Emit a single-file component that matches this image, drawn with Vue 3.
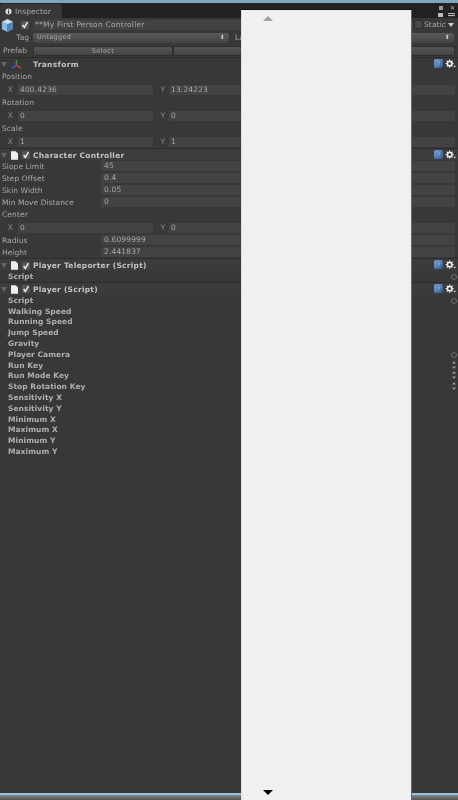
<script setup>
const charRows = [
  ['Slope Limit', '45'], ['Step Offset', '0.4'], ['Skin Width', '0.05'], ['Min Move Distance', '0']
]
const playerRows = [
  ['Walking Speed', ''], ['Running Speed', ''], ['Jump Speed', ''], ['Gravity', ''], ['Player Camera', 'dot'],
  ['Run Key', 'sel'], ['Run Mode Key', 'sel'], ['Stop Rotation Key', 'sel'], ['Sensitivity X', ''], ['Sensitivity Y', ''],
  ['Minimum X', ''], ['Maximum X', ''], ['Minimum Y', ''], ['Maximum Y', '']
]
const transform = [
  { label: 'Position', x: '400.4236', y: '13.24223' },
  { label: 'Rotation', x: '0', y: '0' },
  { label: 'Scale', x: '1', y: '1' }
]
const gearPath = 'M5 .6 6 .6 6.3 2 7.4 2.5 8.6 1.8 9.3 2.5 8.6 3.7 9 4.8 10.4 5.1 10.4 6 9 6.3 8.6 7.4 9.3 8.6 8.6 9.3 7.4 8.6 6.3 9 6 10.4 5 10.4 4.7 9 3.6 8.6 2.4 9.3 1.7 8.6 2.4 7.4 2 6.3 .6 6 .6 5.1 2 4.8 2.4 3.7 1.7 2.5 2.4 1.8 3.6 2.5 4.7 2Z'
</script>

<template>
  <div class="page">
    <div class="content">
      <div class="topline"></div>
      <div class="tabbar">
        <div class="tab">
          <svg class="info" viewBox="0 0 8 8"><circle cx="4" cy="4" r="3.5" fill="#ddd"/><rect x="3.4" y="1.5" width="1.3" height="1.2" fill="#333"/><rect x="3.4" y="3.3" width="1.3" height="3.2" fill="#333"/></svg>
          <span>Inspector</span>
        </div>
        <div class="winbtns">
          <div class="winrow"><span class="tiny-square"></span><span class="tiny-x">✕</span></div>
          <div class="winrow"><span class="lock"></span><span class="menu"></span></div>
        </div>
      </div>

      <div class="gohead">
        <svg class="cube" viewBox="0 0 14 16">
          <path d="M7 1 13 4 7 7 1 4Z" fill="#c9def2"/><path d="M1 4 7 7V15L1 12Z" fill="#8fb8e0"/><path d="M13 4 7 7V15L13 12Z" fill="#4d86c4"/>
        </svg>
        <span class="check"><svg viewBox="0 0 10 10"><path d="M2 5 4.2 8 8 1.5" fill="none" stroke="#eee" stroke-width="1.8"/></svg></span>
        <div class="namefield">**My First Person Controller</div>
        <span class="staticbox"></span><span class="statictext">Static</span><span class="tridown"></span>
      </div>
      <div class="tagrow">
        <span class="taglabel">Tag</span>
        <div class="dropdown first">Untagged<span class="updown">⬍</span></div>
        <span class="laylabel">La</span>
        <div class="dropdown second"><span></span><span class="updown">⬍</span></div>
      </div>
      <div class="prefabrow">
        <span class="preflabel">Prefab</span>
        <div class="prefbtn">Select</div>
        <div class="prefbtn rev">Revert</div>
      </div>

      <div class="comp transform-head">
        <span class="fold"></span>
        <svg class="axis" viewBox="0 0 12 12"><path d="M6 1V7" stroke="#3c9a3c" stroke-width="1.6"/><path d="M6 7 1 10" stroke="#3f58d8" stroke-width="1.6"/><path d="M6 7 11 10" stroke="#d23b3b" stroke-width="1.6"/></svg>
        <span class="title transform-title">Transform</span>
        <span class="help">?</span>
        <svg class="gear" viewBox="0 0 13 11"><path :d="gearPath" fill="#eee"/><circle cx="5.5" cy="5.5" r="1.7" fill="#3a3a3a"/><path d="M10 8H13L11.5 10Z" fill="#ddd"/></svg>
      </div>
      <template v-for="t in transform" :key="t.label">
        <div class="vlabel">{{ t.label }}</div>
        <div class="vecrow">
          <span class="axislab">X</span><div class="field">{{ t.x }}</div>
          <span class="axislab y">Y</span><div class="field wide">{{ t.y }}</div>
        </div>
      </template>

      <div class="comp comp-char">
        <span class="fold"></span>
        <svg class="doc" viewBox="0 0 9 11"><path d="M0 0H6L9 3V11H0Z" fill="#eee"/></svg>
        <span class="check"><svg viewBox="0 0 10 10"><path d="M2 5 4.2 8 8 1.5" fill="none" stroke="#eee" stroke-width="1.8"/></svg></span>
        <span class="title">Character Controller</span>
        <span class="help">?</span>
        <svg class="gear" viewBox="0 0 13 11"><path :d="gearPath" fill="#eee"/><circle cx="5.5" cy="5.5" r="1.7" fill="#3a3a3a"/><path d="M10 8H13L11.5 10Z" fill="#ddd"/></svg>
      </div>
      <div v-for="r in charRows" :key="r[0]" class="proprow">
        <span class="plabel">{{ r[0] }}</span><div class="field pfield">{{ r[1] }}</div>
      </div>
      <div class="vlabel">Center</div>
      <div class="vecrow">
        <span class="axislab">X</span><div class="field">0</div>
        <span class="axislab y">Y</span><div class="field wide">0</div>
      </div>
      <div class="proprow"><span class="plabel">Radius</span><div class="field pfield">0.6099999</div></div>
      <div class="proprow"><span class="plabel">Height</span><div class="field pfield">2.441837</div></div>

      <div class="comp comp-script">
        <span class="fold"></span>
        <svg class="doc" viewBox="0 0 9 11"><path d="M0 0H6L9 3V11H0Z" fill="#eee"/></svg>
        <span class="check"><svg viewBox="0 0 10 10"><path d="M2 5 4.2 8 8 1.5" fill="none" stroke="#eee" stroke-width="1.8"/></svg></span>
        <span class="title">Player Teleporter (Script)</span>
        <span class="help">?</span>
        <svg class="gear" viewBox="0 0 13 11"><path :d="gearPath" fill="#eee"/><circle cx="5.5" cy="5.5" r="1.7" fill="#3a3a3a"/><path d="M10 8H13L11.5 10Z" fill="#ddd"/></svg>
      </div>
      <div class="srow"><span>Script</span><i class="ring"></i></div>

      <div class="comp comp-script">
        <span class="fold"></span>
        <svg class="doc" viewBox="0 0 9 11"><path d="M0 0H6L9 3V11H0Z" fill="#eee"/></svg>
        <span class="check"><svg viewBox="0 0 10 10"><path d="M2 5 4.2 8 8 1.5" fill="none" stroke="#eee" stroke-width="1.8"/></svg></span>
        <span class="title">Player (Script)</span>
        <span class="help">?</span>
        <svg class="gear" viewBox="0 0 13 11"><path :d="gearPath" fill="#eee"/><circle cx="5.5" cy="5.5" r="1.7" fill="#3a3a3a"/><path d="M10 8H13L11.5 10Z" fill="#ddd"/></svg>
      </div>
      <div class="srow"><span>Script</span><i class="ring"></i></div>
      <div v-for="r in playerRows" :key="r[0]" class="srow">
        <span>{{ r[0] }}</span>
        <i v-if="r[1] === 'dot'" class="ring"></i>
        <svg v-else-if="r[1] === 'sel'" class="sel" viewBox="0 0 4 8"><path d="M2 0 4 2.6H0Z M2 8 4 5.4H0Z" fill="#999"/></svg>
      </div>

      <div class="bottom"></div>
    </div>

    <div class="popup">
      <span class="arrow-up"></span>
      <span class="arrow-down"></span>
    </div>
  </div>
</template>

<style scoped>
.page {
  position: relative;
  width: 458px;
  height: 800px;
  overflow: hidden;
  background: #383838;
  font-family: "DejaVu Sans", sans-serif;
  font-size: 7.5px;
  line-height: 11px;
  white-space: nowrap;
}
.content {
  height: 800px;
  display: flex;
  flex-direction: column;
  color: #a8a8a8;
  filter: blur(0.35px);
}
.topline { height: 3px; flex: none; background: #7fa6bd; }
.tabbar { height: 15px; flex: none; display: flex; justify-content: space-between; background: #222; padding-top: 1px; box-sizing: border-box; }
.tab {
  width: 62px; background: #383838; border-radius: 3px 3px 0 0; display: flex; align-items: center;
  gap: 3px; padding-left: 5px; box-sizing: border-box; letter-spacing: 0.1px;
}
.info { width: 7px; height: 7px; }
.winbtns { width: 26px; display: flex; flex-direction: column; }
.winrow { display: flex; justify-content: space-between; align-items: center; height: 7px; padding: 0 3px 0 6px; }
.tiny-square { width: 4px; height: 4px; margin-left: 1px; background: #999; }
.tiny-x { font-size: 6px; line-height: 6px; color: #bbb; }
.lock { width: 5px; height: 4px; background: #bbb; }
.menu { width: 7px; height: 4px; background: repeating-linear-gradient(#bbb 0 1px, #333 1px 2px); }

.gohead { height: 13px; flex: none; position: relative; display: flex; align-items: center; padding-left: 21px; box-sizing: border-box; }
.cube { position: absolute; left: 1px; top: 0; width: 13px; height: 15px; }
.gohead .check { margin-left: 0; margin-right: 4px; }
.namefield { width: 380px; height: 10px; line-height: 10px; background: #424242; letter-spacing: 0.22px; padding-left: 2px; box-sizing: border-box; border-radius: 1px; flex: none; }
.staticbox { width: 9px; height: 9px; margin-left: 1px; background: #4a4a4a; border-radius: 2px; border: 1px solid #2a2a2a; box-sizing: border-box; flex: none; }
.statictext { margin-left: 1px; letter-spacing: 0.1px; }
.tridown { width: 0; height: 0; margin-left: 2px; border: 3px solid transparent; border-top: 4px solid #ccc; border-bottom: 0; }

.tagrow { height: 13px; flex: none; display: flex; align-items: center; }
.taglabel { width: 33px; text-align: right; padding-right: 4px; box-sizing: border-box; flex: none; }
.dropdown {
  height: 10px; line-height: 8px; background: linear-gradient(#5a5a5a, #444); border-radius: 2px; display: flex;
  justify-content: space-between; padding: 0 4px; box-sizing: border-box; font-size: 6.5px; letter-spacing: .3px;
}
.dropdown.first { width: 196px; flex: none; }
.laylabel { width: 11px; margin-left: 6px; flex: none; }
.dropdown.second { flex: 1; margin-right: 4px; }
.updown { font-size: 6px; color: #ccc; }

.prefabrow { height: 13px; flex: none; display: flex; align-items: center; }
.preflabel { width: 33px; padding-left: 3px; box-sizing: border-box; flex: none; }
.prefbtn {
  flex: none; width: 140px; height: 10px; line-height: 8px; text-align: center;
  background: linear-gradient(#555, #444); border: 1px solid #2e2e2e; border-radius: 2px; box-sizing: border-box; font-size: 6.5px; letter-spacing: .4px;
}
.prefbtn.rev { width: 282px; }

.comp { flex: none; position: relative; display: flex; align-items: center; color: #c4c4c4; font-weight: 700; border-top: 1px solid #2c2c2c; background: #3c3c3c; }
.transform-head { height: 12px; background: none; }
.comp-char { height: 10px; padding-top: 1px; }
.comp-script { height: 11px; padding-top: 1px; }
.fold { width: 0; height: 0; margin-left: 1px; border: 3px solid transparent; border-top: 5px solid #666; border-bottom: 0; }
.axis { width: 11px; height: 11px; margin-left: 4px; }
.doc { width: 7px; height: 9px; margin-left: 4px; }
.check { flex: none; width: 8px; height: 8px; margin-left: 4px; background: #555; border-radius: 1px; display: block; }
.check svg { display: block; width: 8px; height: 8px; }
.title { margin-left: 3px; letter-spacing: .25px; }
.transform-title { margin-left: 11px; letter-spacing: .35px; }
.help {
  position: absolute; left: 434px; top: 1px; width: 9px; height: 9px; border-radius: 2px; text-align: center;
  background: linear-gradient(135deg, #7ea2d2, #2b5a94); font-size: 6px; line-height: 9px; color: #9fc0e6; font-weight: 400;
}
.gear { position: absolute; left: 445px; top: 1px; width: 11px; height: 9.3px; }

.vlabel { height: 13px; flex: none; line-height: 13px; padding-left: 2px; letter-spacing: .1px; }
.vecrow { height: 13px; flex: none; display: flex; align-items: center; }
.axislab { width: 18px; text-align: right; padding-right: 5px; box-sizing: border-box; color: #888; flex: none; }
.axislab.y { width: 16px; padding-right: 4px; }
.field { height: 10px; line-height: 10px; background: #434343; padding-left: 2px; box-sizing: border-box; width: 135px; flex: none; letter-spacing: .15px; }
.field.wide { width: 286px; }
.proprow { height: 12px; flex: none; display: flex; align-items: center; }
.plabel { width: 101px; padding-left: 2px; box-sizing: border-box; letter-spacing: .05px; flex: none; }
.pfield { width: 354px; padding-left: 3px; }
.srow { height: 10.8px; flex: none; position: relative; padding-left: 8px; line-height: 11px; font-weight: 700; color: #b0b0b0; letter-spacing: .05px; }
.ring { position: absolute; left: 451px; top: 3px; width: 6px; height: 6px; border: 1px solid #6c6c6c; border-radius: 50%; box-sizing: border-box; }
.sel { position: absolute; left: 452px; top: 1px; width: 4px; height: 8px; }

.bottom { margin-top: auto; height: 7px; flex: none; background: linear-gradient(#9fc2d8 0 2px, #6f8a99 2px 3px, #7a7a7a 3px, #555); }
.popup {
  position: absolute; left: 241px; top: 10px; width: 171px; bottom: 0; background: #f0f0f0;
  border-right: 1px solid #666; border-left: 1px solid #ddd; box-shadow: 0 -1px 0 #111; box-sizing: border-box;
}
.arrow-up { position: absolute; left: 21px; top: 6px; width: 0; height: 0; border: 5px solid transparent; border-bottom: 5px solid #a0a0a0; border-top: 0; }
.arrow-down { position: absolute; left: 21px; top: 780px; width: 0; height: 0; border: 5px solid transparent; border-top: 5px solid #000; border-bottom: 0; }
</style>
